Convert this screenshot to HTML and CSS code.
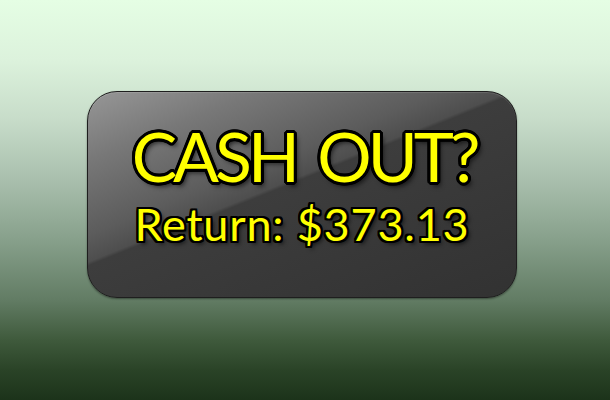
FILE: index.html
```html
<!DOCTYPE html>
<html>
<head>
<meta charset="utf-8">
<link rel="stylesheet" href="styles.css">
</head>
<body>
<div class="stage">
  <div class="card">
    <div class="title">CASH OUT?</div>
    <div class="amount">Return: $373.13</div>
  </div>
</div>
</body>
</html>
```

FILE: styles.css
```css
html, body {
  margin: 0;
  padding: 0;
}
body {
  width: 610px;
  height: 400px;
  overflow: hidden;
  background: linear-gradient(180deg,
    #e5fee4 0px,
    #dcf2dc 60px,
    #c7dcc9 120px,
    #a9bfad 180px,
    #87a08b 240px,
    #627c64 300px,
    #3f5a3c 340px,
    #2a4327 370px,
    #1c331a 400px);
  font-family: Lato, "Open Sans", sans-serif;
}
.stage {
  padding: 91px 0 0 87px;
}
.card {
  box-sizing: border-box;
  width: 430px;
  height: 207px;
  border: 1px solid #1e1e1e;
  border-radius: 30px;
  padding-top: 30px;
  display: flex;
  flex-direction: column;
  align-items: center;
  gap: 12px;
  background:
    linear-gradient(158deg,
      #979797 0%,
      #787878 18%,
      #5c5c5c 38%,
      #4e4e4e 45%,
      #3d3d3d 46%,
      #383838 70%,
      #323232 100%);
  box-shadow: 0 1px 2px rgba(0,0,0,0.4), inset 0 1px 0 rgba(255,255,255,0.12);
  color: #ffff00;
}
.title {
  font-size: 68px;
  line-height: 68px;
  height: 68px;
  letter-spacing: -4px;
  word-spacing: 8px;
  padding-left: 4px;
  text-shadow:
    3px 0 0 #000, -3px 0 0 #000, 0 3px 0 #000, 0 -3px 0 #000,
    2px 2px 0 #000, -2px 2px 0 #000, 2px -2px 0 #000, -2px -2px 0 #000,
    3px 1px 0 #000, -3px 1px 0 #000, 3px -1px 0 #000, -3px -1px 0 #000,
    1px 3px 0 #000, -1px 3px 0 #000, 1px -3px 0 #000, -1px -3px 0 #000,
    3px 4px 5px rgba(0,0,0,0.7);
}
.amount {
  font-size: 45px;
  line-height: 45px;
  height: 45px;
  letter-spacing: 0.8px;
  text-shadow:
    2px 0 0 #000, -2px 0 0 #000, 0 2px 0 #000, 0 -2px 0 #000,
    2px 2px 0 #000, -2px 2px 0 #000, 2px -2px 0 #000, -2px -2px 0 #000,
    2px 1px 0 #000, -2px 1px 0 #000, 2px -1px 0 #000, -2px -1px 0 #000,
    3px 3px 4px rgba(0,0,0,0.7);
}
```
